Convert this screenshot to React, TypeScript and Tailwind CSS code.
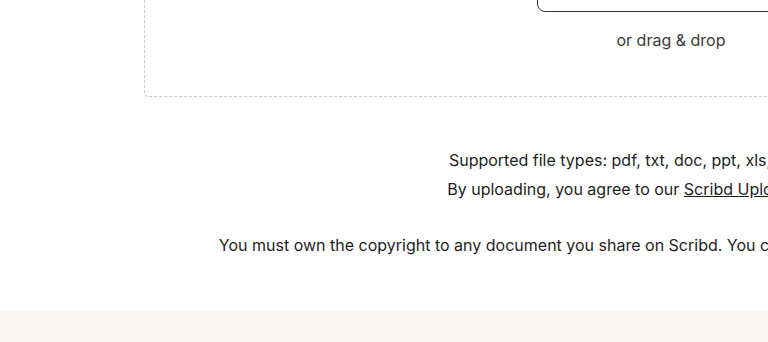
import React from "react";

export default function App() {
  return (
    <div
      className="w-[768px] h-[342px] overflow-hidden bg-white flex flex-col"
      style={{ fontFamily: "Inter, 'Liberation Sans', sans-serif" }}
    >
      <div className="w-[1342px] flex flex-col items-center text-[16px] text-[#1e1e1e]">
        <div className="-mt-[60px] w-[1054px] h-[157px] border border-dashed border-[#c9c9c9] rounded-[4px] flex flex-col items-center pt-[23px]">
          <div className="w-[268px] h-[48px] border border-[#333] rounded-[8px]" />
          <div className="mt-[16px] leading-[24px] text-[#3a3a3a]">or drag &amp; drop</div>
        </div>
        <div className="mt-[49px] flex flex-col items-center leading-[29px]">
          <p>Supported file types: pdf, txt, doc, ppt, xls, docx, and more</p>
          <p>
            By uploading, you agree to our <span className="underline">Scribd Uploader Agreement</span>
          </p>
        </div>
        <p className="mt-[27px] leading-[29px]">
          You must own the copyright to any document you share on Scribd. You can read more about this in our Copyright FAQs.
        </p>
      </div>
      <div className="mt-auto h-[32px] bg-[#f8f7f3]" />
    </div>
  );
}
